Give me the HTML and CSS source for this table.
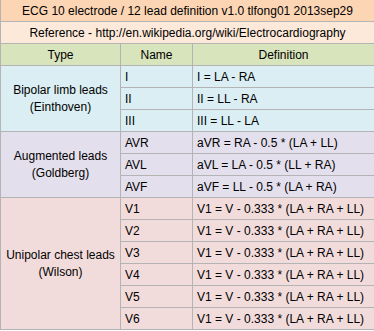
FILE: index.html
```html
<!DOCTYPE html>
<html>
<head>
<meta charset="utf-8">
<link rel="stylesheet" href="styles.css">
</head>
<body>
<div class="grid">
  <div class="cell title span-all">ECG 10 electrode / 12 lead definition v1.0 tlfong01 2013sep29</div>
  <div class="cell ref span-all">Reference - http://en.wikipedia.org/wiki/Electrocardiography</div>
  <div class="cell head center">Type</div>
  <div class="cell head center">Name</div>
  <div class="cell head center">Definition</div>

  <div class="cell blue type span3">Bipolar limb leads<br>(Einthoven)</div>
  <div class="cell blue">I</div><div class="cell blue">I = LA - RA</div>
  <div class="cell blue">II</div><div class="cell blue">II = LL - RA</div>
  <div class="cell blue">III</div><div class="cell blue">III = LL - LA</div>

  <div class="cell purple type span3">Augmented leads<br>(Goldberg)</div>
  <div class="cell purple">AVR</div><div class="cell purple">aVR = RA - 0.5 * (LA + LL)</div>
  <div class="cell purple">AVL</div><div class="cell purple">aVL = LA - 0.5 * (LL + RA)</div>
  <div class="cell purple">AVF</div><div class="cell purple">aVF = LL - 0.5 * (LA + RA)</div>

  <div class="cell pink type span6">Unipolar chest leads<br>(Wilson)</div>
  <div class="cell pink">V1</div><div class="cell pink">V1 = V - 0.333 * (LA + RA + LL)</div>
  <div class="cell pink">V2</div><div class="cell pink">V1 = V - 0.333 * (LA + RA + LL)</div>
  <div class="cell pink">V3</div><div class="cell pink">V1 = V - 0.333 * (LA + RA + LL)</div>
  <div class="cell pink">V4</div><div class="cell pink">V1 = V - 0.333 * (LA + RA + LL)</div>
  <div class="cell pink">V5</div><div class="cell pink">V1 = V - 0.333 * (LA + RA + LL)</div>
  <div class="cell pink">V6</div><div class="cell pink">V1 = V - 0.333 * (LA + RA + LL)</div>
</div>
</body>
</html>
```
FILE: styles.css
```css
html, body {
  margin: 0;
  padding: 0;
  background: #ffffff;
  overflow: hidden;
}
.grid {
  display: grid;
  grid-template-columns: 119px 71px 181px;
  grid-auto-rows: 21px;
  gap: 1px;
  width: 373px;
  padding: 0 1px 1px 1px;
  background: #b4b4b4;
  font-family: Arial, "Liberation Sans", sans-serif;
  font-size: 12px;
  color: #000;
}
.cell {
  display: flex;
  align-items: center;
  padding-left: 4px;
  white-space: nowrap;
  overflow: hidden;
}
.span-all {
  grid-column: 1 / -1;
  justify-content: center;
  padding-left: 0;
}
.center {
  justify-content: center;
  padding-left: 0;
}
.type {
  justify-content: center;
  text-align: center;
  padding-left: 0;
  line-height: 17px;
}
.span3 { grid-row: span 3; }
.span6 { grid-row: span 6; }
.title { background: #fcd5b4; }
.ref { background: #fde9d9; }
.head { background: #d8e4bc; }
.blue { background: #daeef3; }
.purple { background: #e4dfec; }
.pink { background: #f2dcdb; }
```
